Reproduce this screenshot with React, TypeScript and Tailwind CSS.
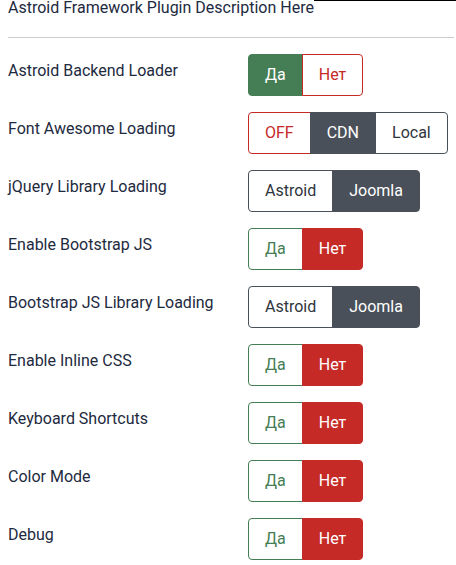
import { useState } from "react";

type Tone = "green" | "red" | "dark";

type Option = { label: string; tone: Tone };

type Setting = {
  name: string;
  options: Option[];
  value: number;
};

const yesNo: Option[] = [
  { label: "Да", tone: "green" },
  { label: "Нет", tone: "red" },
];

const libs: Option[] = [
  { label: "Astroid", tone: "dark" },
  { label: "Joomla", tone: "dark" },
];

const initial: Setting[] = [
  { name: "Astroid Backend Loader", options: yesNo, value: 0 },
  {
    name: "Font Awesome Loading",
    options: [
      { label: "OFF", tone: "red" },
      { label: "CDN", tone: "dark" },
      { label: "Local", tone: "dark" },
    ],
    value: 1,
  },
  { name: "jQuery Library Loading", options: libs, value: 1 },
  { name: "Enable Bootstrap JS", options: yesNo, value: 1 },
  { name: "Bootstrap JS Library Loading", options: libs, value: 1 },
  { name: "Enable Inline CSS", options: yesNo, value: 1 },
  { name: "Keyboard Shortcuts", options: yesNo, value: 1 },
  { name: "Color Mode", options: yesNo, value: 1 },
  { name: "Debug", options: yesNo, value: 1 },
];

const activeTone: Record<Tone, string> = {
  green: "bg-[#457d54] border-[#457d54] text-white",
  red: "bg-[#c52a27] border-[#c52a27] text-white",
  dark: "bg-[#4a5059] border-[#4a5059] text-white",
};

const idleTone: Record<Tone, string> = {
  green: "bg-white border-[#457d54] text-[#457d54]",
  red: "bg-white border-[#c52a27] text-[#c52a27]",
  dark: "bg-white border-[#4a5059] text-[#2f353c]",
};

function SwitchGroup({
  options,
  value,
  onChange,
}: {
  options: Option[];
  value: number;
  onChange: (i: number) => void;
}) {
  return (
    <div className="inline-flex">
      {options.map((opt, i) => (
        <button
          key={opt.label}
          type="button"
          onClick={() => onChange(i)}
          className={[
            "border px-4 py-2 text-base leading-6",
            i === value ? activeTone[opt.tone] : idleTone[opt.tone],
            i === 0 ? "rounded-l-[4px]" : "-ml-px",
            i === options.length - 1 ? "rounded-r-[4px]" : "",
          ].join(" ")}
        >
          {opt.label}
        </button>
      ))}
    </div>
  );
}

export default function App() {
  const [settings, setSettings] = useState(initial);

  const update = (row: number, v: number) =>
    setSettings((s) => s.map((it, i) => (i === row ? { ...it, value: v } : it)));

  return (
    <div className="relative min-h-[565px] overflow-hidden bg-white pl-2 pr-[2px] font-['Roboto',sans-serif] text-[#1d2a40]">
      <div className="absolute right-0 top-0 h-px w-[142px] bg-black" />
      <div className="text-base leading-4">
        Astroid Framework Plugin Description Here
      </div>
      <hr className="mb-4 mt-[21px] border-t border-[#cccccc]" />

      <div className="flex flex-col gap-4">
        {settings.map((s, i) => (
          <div key={s.name} className="grid grid-cols-[240px_1fr]">
            <div className="pt-[5px] text-base leading-6">{s.name}</div>
            <div>
              <SwitchGroup
                options={s.options}
                value={s.value}
                onChange={(v) => update(i, v)}
              />
            </div>
          </div>
        ))}
      </div>
    </div>
  );
}
